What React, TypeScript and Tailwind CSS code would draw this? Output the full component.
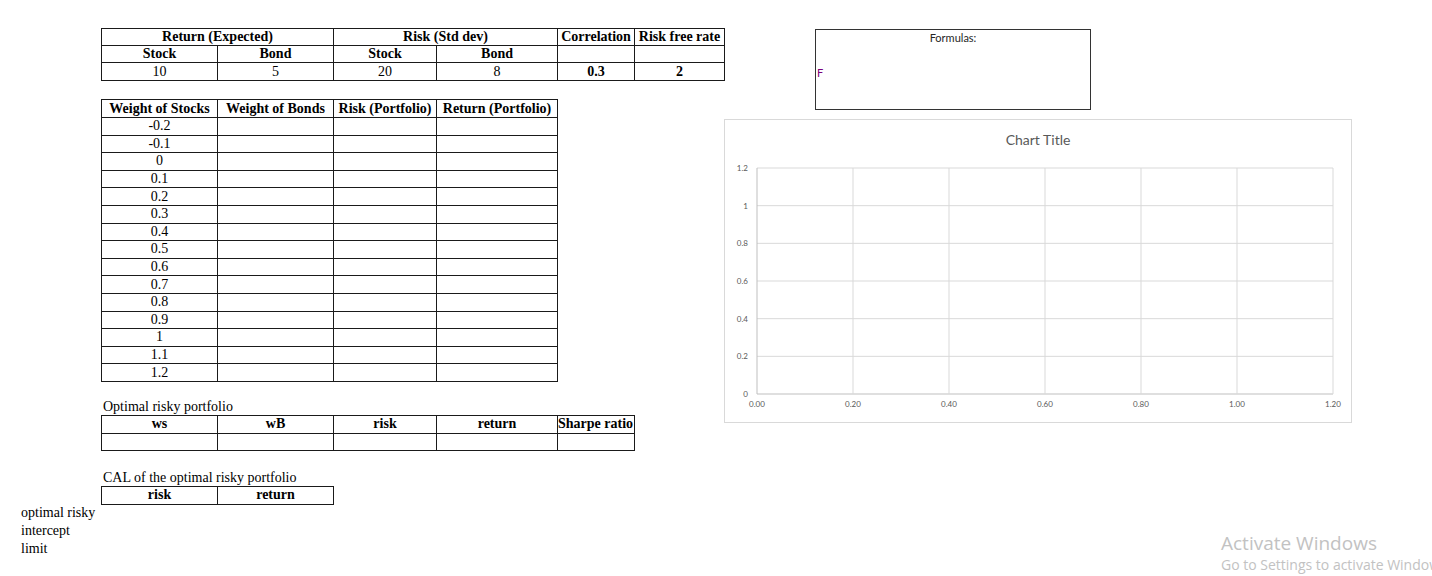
import React from "react";

const cell = "border border-[#1a1a1a] p-0 text-center align-middle";
const head = cell + " font-bold";

const weights = ["-0.2", "-0.1", "0", "0.1", "0.2", "0.3", "0.4", "0.5", "0.6", "0.7", "0.8", "0.9", "1", "1.1", "1.2"];

const Cols = ({ widths }: { widths: number[] }) => (
  <colgroup>
    {widths.map((w, i) => (
      <col key={i} style={{ width: w }} />
    ))}
  </colgroup>
);

const InputsTable = () => (
  <table className="border-collapse table-fixed w-[623px] ml-[101px] text-[14px] leading-none">
    <Cols widths={[116, 116, 103, 121, 77, 90]} />
    <tbody>
      <tr className="h-[17px]">
        <td colSpan={2} className={head}>Return (Expected)</td>
        <td colSpan={2} className={head}>Risk (Std dev)</td>
        <td className={head}>Correlation</td>
        <td className={head}>Risk free rate</td>
      </tr>
      <tr className="h-[17px]">
        <td className={head}>Stock</td>
        <td className={head}>Bond</td>
        <td className={head}>Stock</td>
        <td className={head}>Bond</td>
        <td className={cell}></td>
        <td className={cell}></td>
      </tr>
      <tr className="h-[18px]">
        <td className={cell}>10</td>
        <td className={cell}>5</td>
        <td className={cell}>20</td>
        <td className={cell}>8</td>
        <td className={head}>0.3</td>
        <td className={head}>2</td>
      </tr>
    </tbody>
  </table>
);

const WeightsTable = () => (
  <table className="border-collapse table-fixed w-[456px] ml-[101px] mt-[18px] text-[14px] leading-none">
    <Cols widths={[116, 116, 103, 121]} />
    <tbody>
      <tr className="h-[18px]">
        <td className={head}>Weight of Stocks</td>
        <td className={head}>Weight of Bonds</td>
        <td className={head}>Risk (Portfolio)</td>
        <td className={head}>Return (Portfolio)</td>
      </tr>
      {weights.map((w) => (
        <tr key={w} className="h-[17.6px]">
          <td className={cell}>{w}</td>
          <td className={cell}></td>
          <td className={cell}></td>
          <td className={cell}></td>
        </tr>
      ))}
    </tbody>
  </table>
);

const OptimalTable = () => (
  <>
    <div className="ml-[103px] mt-[16px] h-[17px] text-[14px] leading-[17px]">Optimal risky portfolio</div>
    <table className="border-collapse table-fixed w-[533px] ml-[101px] text-[14px] leading-none">
      <Cols widths={[116, 116, 103, 121, 77]} />
      <tbody>
        <tr className="h-[18px]">
          <td className={head}>ws</td>
          <td className={head}>wB</td>
          <td className={head}>risk</td>
          <td className={head}>return</td>
          <td className={head + " whitespace-nowrap text-left"}>Sharpe ratio</td>
        </tr>
        <tr className="h-[17px]">
          <td className={cell}></td>
          <td className={cell}></td>
          <td className={cell}></td>
          <td className={cell}></td>
          <td className={cell}></td>
        </tr>
      </tbody>
    </table>
  </>
);

const CalTable = () => (
  <>
    <div className="ml-[103px] mt-[18px] h-[17px] text-[14px] leading-[17px]">CAL of the optimal risky portfolio</div>
    <table className="border-collapse table-fixed w-[232px] ml-[101px] text-[14px] leading-none">
      <Cols widths={[116, 116]} />
      <tbody>
        <tr className="h-[18px]">
          <td className={head}>risk</td>
          <td className={head}>return</td>
        </tr>
      </tbody>
    </table>
    <div className="ml-[21px] -mt-[1px] text-[14px] leading-[18px]">
      <div>optimal risky</div>
      <div>intercept</div>
      <div>limit</div>
    </div>
  </>
);

const yTicks = ["1.2", "1", "0.8", "0.6", "0.4", "0.2", "0"];
const xTicks = ["0.00", "0.20", "0.40", "0.60", "0.80", "1.00", "1.20"];

const Chart = () => {
  const left = 32;
  const top = 48;
  const w = 576;
  const h = 226;
  return (
    <div className="w-[628px] h-[304px] border border-[#d9d9d9] bg-white">
      <svg width="626" height="302" className="block font-['Lato',sans-serif]">
        <text x="313" y="25" textAnchor="middle" fontSize="14" fill="#595959">
          Chart Title
        </text>
        {yTicks.map((t, i) => {
          const y = top + (h / 6) * i;
          return (
            <g key={t}>
              <line x1={left} x2={left + w} y1={y} y2={y} stroke={i === 6 ? "#bfbfbf" : "#d9d9d9"} strokeWidth="1" />
              <text x={left - 9} y={y + 3} textAnchor="end" fontSize="8" fill="#595959">
                {t}
              </text>
            </g>
          );
        })}
        {xTicks.map((t, i) => {
          const x = left + (w / 6) * i;
          return (
            <g key={t}>
              <line x1={x} x2={x} y1={top} y2={top + h} stroke={i === 0 ? "#bfbfbf" : "#d9d9d9"} strokeWidth="1" />
              <text x={x} y={top + h + 13} textAnchor="middle" fontSize="8" fill="#595959">
                {t}
              </text>
            </g>
          );
        })}
      </svg>
    </div>
  );
};

export default function App() {
  return (
    <div className="relative w-[1432px] h-[576px] overflow-hidden bg-white text-black font-['Liberation_Serif',serif]">
      <div className="flex">
        <div className="w-[724px] pt-[28px]">
          <InputsTable />
          <WeightsTable />
          <OptimalTable />
          <CalTable />
        </div>
        <div className="flex flex-col pt-[29px]">
          <div className="ml-[91px] w-[276px] h-[81px] border border-[#333333] font-['Lato',sans-serif]">
            <div className="text-center text-[11px] leading-[16px] text-[#262626]">Formulas:</div>
            <div className="mt-[20px] pl-[1px] text-[11px] leading-[14px] text-[#7a007a]">F</div>
          </div>
          <div className="mt-[9px]">
            <Chart />
          </div>
        </div>
      </div>
      <div className="absolute left-[1221px] top-[531px] whitespace-nowrap font-['Open_Sans',sans-serif] text-[#c2c2c2]">
        <div className="text-[19px] leading-[24px]">Activate Windows</div>
        <div className="text-[14px] leading-[20px]">Go to Settings to activate Windows</div>
      </div>
    </div>
  );
}
